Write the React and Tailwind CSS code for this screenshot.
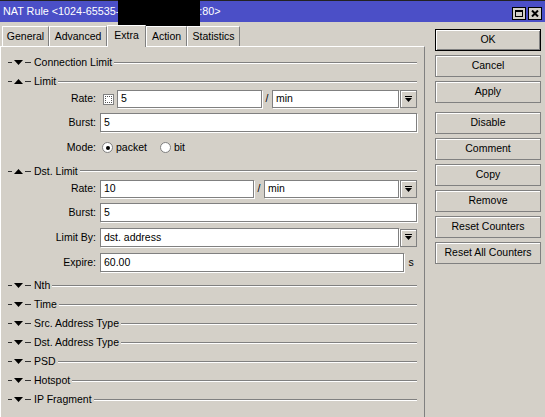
import React from 'react'

function Arrow({ open }) {
  return (
    <svg width="9" height="5" viewBox="0 0 9 5" className="mx-[2px]">
      {open ? <path d="M0 5 L4.5 0 L9 5 Z" fill="#000" /> : <path d="M0 0 L9 0 L4.5 5 Z" fill="#000" />}
    </svg>
  )
}

function Section({ title, open, className = '' }) {
  return (
    <div className={'flex items-center pl-[7px] ' + className}>
      <span className="w-[4px] h-px bg-[#333]"></span>
      <Arrow open={open} />
      <span className="w-[6px] h-px bg-[#333]"></span>
      <span className="ml-[3px] mr-[2px] leading-none">{title}</span>
      <span className="flex-1 h-[2px] border-t border-t-[#808080] border-b border-b-white"></span>
    </div>
  )
}

function Field({ value, className = '' }) {
  return (
    <div className={'bg-white border border-[#808080] shadow-[1px_1px_0_#fff] flex items-center pl-[3px] ' + className}>
      {value}
    </div>
  )
}

function DropBtn({ className = '' }) {
  return (
    <div className={'w-[17px] h-[18px] ml-px border border-[#808080] shadow-[inset_1px_1px_0_#fff] flex items-center justify-center ' + className}>
      <svg width="7" height="7" viewBox="0 0 7 7">
        <rect x="0" y="0" width="7" height="1" fill="#000" />
        <path d="M0 2 H7 L3.5 6 Z" fill="#000" />
      </svg>
    </div>
  )
}

function Row({ label, children, className = '' }) {
  return (
    <div className={'flex items-center ' + className}>
      <div className="w-[95px] text-right">{label}</div>
      <div className="flex-1 flex items-center ml-[4px]">{children}</div>
    </div>
  )
}

function Radio({ checked }) {
  return (
    <span className="w-[11px] h-[11px] rounded-full bg-white border border-[#808080] flex items-center justify-center">
      {checked && <span className="w-[4px] h-[4px] rounded-full bg-black"></span>}
    </span>
  )
}

function Btn({ label, def, className = '' }) {
  return (
    <div
      className={
        'h-[22px] flex items-center justify-center border ' +
        (def ? 'border-black shadow-[inset_1px_1px_0_#fff,inset_-1px_-1px_0_#808080] ' : 'border-[#808080] shadow-[inset_1px_1px_0_#fff] ') +
        className
      }
    >
      {label}
    </div>
  )
}

export default function App() {
  const tabs = [
    { name: 'General', w: 'w-[47px]' },
    { name: 'Advanced', w: 'w-[58px]' },
    { name: 'Extra', w: 'w-[39px]', active: true },
    { name: 'Action', w: 'w-[41px]' },
    { name: 'Statistics', w: 'w-[53px]' }
  ]

  const collapsed = ['Nth', 'Time', 'Src. Address Type', 'Dst. Address Type', 'PSD', 'Hotspot', 'IP Fragment']

  const buttons = ['Disable', 'Comment', 'Copy', 'Remove', 'Reset Counters', 'Reset All Counters']

  return (
    <div className="relative w-[545px] h-[417px] overflow-hidden bg-[#d4d0c8] text-black text-[10.5px] font-['Liberation_Sans',Arial,sans-serif]">
      {/* Title bar */}
      <div className="h-[22px] bg-[#4b4fc7] border-t border-t-[#222] flex items-center pl-[3px] pr-[3px]">
        <span className="text-white text-[10.8px]">NAT Rule &lt;1024-65535-</span>
        <span className="inline-block w-[80px]"></span>
        <span className="text-white text-[10.8px]">:80&gt;</span>
        <div className="ml-auto flex gap-[2px] mt-[3px]">
          <div className="w-[14px] h-[13px] bg-[#d4d0c8] border border-black flex items-center justify-center">
            <span className="w-[8px] h-[7px] border border-black border-t-2"></span>
          </div>
          <div className="w-[14px] h-[13px] bg-[#d4d0c8] border border-black flex items-center justify-center">
            <svg width="8" height="7" viewBox="0 0 8 7">
              <path d="M1 0.5 L7 6.5 M7 0.5 L1 6.5" stroke="#000" strokeWidth="2" />
            </svg>
          </div>
        </div>
      </div>
      <div className="absolute left-[118px] top-0 w-[82px] h-[27px] bg-black"></div>

      <div className="flex">
        {/* Left: tabs + panel */}
        <div className="w-[425px] flex flex-col">
          <div className="flex items-end h-[22px] mt-[3px] pl-[2px] relative z-10 -mb-px">
            {tabs.map((t) =>
              t.active ? (
                <div
                  key={t.name}
                  className={t.w + ' h-[22px] bg-[#d4d0c8] border-t border-l border-white border-r border-r-[#808080] flex items-center justify-center pb-[2px]'}
                >
                  {t.name}
                </div>
              ) : (
                <div
                  key={t.name}
                  className={t.w + ' h-[20px] mb-px border-t border-l border-white border-r border-r-[#808080] flex items-center justify-center'}
                >
                  {t.name}
                </div>
              )
            )}
          </div>

          <div className="h-[371px] border-t border-l border-white border-r border-r-[#808080] pr-[7px]">
            <Section title="Connection Limit" className="h-[17px] mt-[7px]" />
            <Section title="Limit" open className="h-[17px] mt-[2px]" />
            <Row label="Rate:" className="h-[18px]">
              <span className="w-[11px] h-[11px] ml-[3px] mr-[3px] bg-white border border-[#808080] p-px">
                <span className="block w-full h-full border border-dotted border-[#555]"></span>
              </span>
              <Field value="5" className="w-[145px] h-[18px]" />
              <span className="w-[10px] text-center">/</span>
              <Field value="min" className="flex-1 h-[18px]" />
              <DropBtn />
            </Row>
            <Row label="Burst:" className="h-[19px] mt-[5px]">
              <Field value="5" className="flex-1 h-[19px]" />
            </Row>
            <Row label="Mode:" className="h-[17px] mt-[7px]">
              <span className="ml-[2px]"><Radio checked /></span>
              <span className="ml-[3px]">packet</span>
              <span className="ml-[13px]"><Radio /></span>
              <span className="ml-[3px]">bit</span>
            </Row>
            <Section title="Dst. Limit" open className="h-[18px] mt-[6px]" />
            <Row label="Rate:" className="h-[18px]">
              <Field value="10" className="w-[154px] h-[18px]" />
              <span className="w-[10px] text-center">/</span>
              <Field value="min" className="flex-1 h-[18px]" />
              <DropBtn />
            </Row>
            <Row label="Burst:" className="h-[19px] mt-[5px]">
              <Field value="5" className="flex-1 h-[19px]" />
            </Row>
            <Row label="Limit By:" className="h-[19px] mt-[6px]">
              <Field value="dst. address" className="flex-1 h-[19px]" />
              <DropBtn />
            </Row>
            <Row label="Expire:" className="h-[19px] mt-[6px]">
              <Field value="60.00" className="flex-1 h-[19px]" />
              <span className="w-[12px] text-center ml-px">s</span>
            </Row>
            <div className="mt-[4px]">
              {collapsed.map((c) => (
                <Section key={c} title={c} className="h-[19px]" />
              ))}
            </div>
          </div>
        </div>

        {/* Right: buttons */}
        <div className="w-[106px] ml-[10px] mt-[7px] flex flex-col gap-[4px]">
          <Btn label="OK" def />
          <Btn label="Cancel" />
          <Btn label="Apply" />
          {buttons.map((b, i) => (
            <Btn key={b} label={b} className={i === 0 ? 'mt-[5px]' : ''} />
          ))}
        </div>
      </div>
    </div>
  )
}
